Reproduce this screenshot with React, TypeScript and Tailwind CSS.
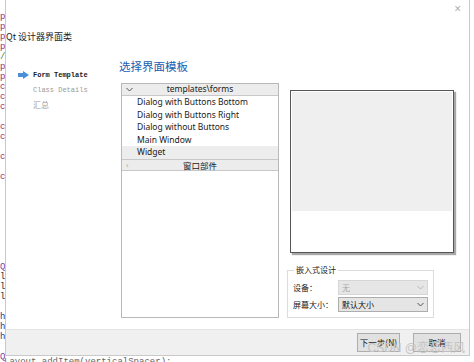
import React from 'react';

const codeMarks = [
  { ch: 'p', c: 'text-[#a0306a]' }, { ch: 'p', c: 'text-[#a0306a]' }, { ch: 'p', c: 'text-[#a0306a]' },
  { ch: 'p', c: 'text-[#a0306a]' }, { ch: '/', c: 'text-[#4a8a4a]' }, { ch: 'p', c: 'text-[#a0306a]' },
  { ch: 'p', c: 'text-[#a0306a]' }, { ch: 'c', c: 'text-[#a0306a]' }, { ch: 'c', c: 'text-[#a0306a]' },
  { ch: 'c', c: 'text-[#a0306a]' }, { ch: '', c: '' }, { ch: 'c', c: 'text-[#a0306a]' },
  { ch: 'c', c: 'text-[#a0306a]' }, { ch: '', c: '' }, { ch: 'c', c: 'text-[#a0306a]' },
  { ch: '', c: '' }, { ch: 'c', c: 'text-[#a0306a]' },
];

const codeMarks2 = [
  { ch: 'Q', c: 'text-[#7a3fa0]' }, { ch: 'l', c: 'text-[#333]' }, { ch: 'l', c: 'text-[#333]' },
  { ch: 'l', c: 'text-[#333]' }, { ch: '', c: '' }, { ch: 'h', c: 'text-[#2a3a8a]' },
  { ch: 'h', c: 'text-[#2a3a8a]' }, { ch: 'h', c: 'text-[#2a3a8a]' }, { ch: '', c: '' },
  { ch: 'Q', c: 'text-[#7a3fa0]' }, { ch: 'v', c: 'text-[#2a3a8a]' },
];

const templates = [
  'Dialog with Buttons Bottom',
  'Dialog with Buttons Right',
  'Dialog without Buttons',
  'Main Window',
  'Widget',
];

const Chevron = ({ className }: { className?: string }) => (
  <svg className={className} width="7" height="5" viewBox="0 0 7 5" fill="none" stroke="currentColor" strokeWidth="1">
    <path d="M0.5 1 L3.5 4 L6.5 1" />
  </svg>
);

const App: React.FC = () => {
  return (
    <div className="relative w-[474px] h-[362px] bg-white overflow-hidden" style={{ fontFamily: '"Noto Sans", "Noto Sans CJK SC", sans-serif' }}>
      {/* editor behind the dialog */}
      <div className="absolute left-0 top-[12px] w-[6px] flex flex-col text-[9px] leading-[10px] font-['Liberation_Mono',monospace]">
        {codeMarks.map((m, i) => (
          <span key={i} className={`h-[10px] ${m.c}`}>{m.ch}</span>
        ))}
      </div>
      <div className="absolute left-0 top-[262px] w-[6px] flex flex-col text-[9px] leading-[10px] font-['Liberation_Mono',monospace]">
        {codeMarks2.map((m, i) => (
          <span key={i} className={`h-[10px] ${m.c}`}>{m.ch}</span>
        ))}
      </div>
      <div className="absolute left-[4px] top-[357px] text-[9px] leading-[10px] text-[#666] font-['Liberation_Mono',monospace] whitespace-nowrap">
        Layout.addItem(verticalSpacer);
      </div>

      {/* dialog */}
      <div className="absolute left-[5px] top-0 w-[465px] h-[356px] bg-white border-l border-r border-b border-[#c9c9c9] flex flex-col">
        <div className="relative h-[54px]">
          <div className="pt-[31px] text-[9px] leading-[12px] text-[#222]" style={{ fontFamily: '"Noto Sans CJK SC", sans-serif' }}>
            Qt 设计器界面类
          </div>
          <span className="absolute right-[8px] top-[3px] text-[12px] text-[#b0b0b0] leading-none">×</span>
        </div>

        <div className="flex flex-1">
          {/* nav */}
          <div className="w-[113px] pt-[15px] pl-[12px] flex flex-col gap-[3px] text-[7px] leading-[12px] font-['Liberation_Mono',monospace]">
            <div className="flex items-center gap-[4px]">
              <svg width="11" height="8" viewBox="0 0 11 8">
                <path d="M0 2 H5 V0 L11 4 L5 8 V6 H0 Z" fill="#4a8fd8" />
              </svg>
              <span className="font-bold text-[#222]">Form Template</span>
            </div>
            <span className="pl-[15px] text-[#9a9a9a]">Class Details</span>
            <span className="pl-[15px] text-[#9a9a9a] text-[8px]" style={{ fontFamily: '"Noto Sans CJK SC", sans-serif' }}>汇总</span>
          </div>

          {/* content */}
          <div className="flex-1 flex flex-col">
            <div className="text-[11.5px] leading-[16px] text-[#2060b0] mt-[4px]" style={{ fontFamily: '"Noto Sans CJK SC", sans-serif' }}>
              选择界面模板
            </div>
            <div className="flex mt-[9px]">
              {/* tree */}
              <div className="ml-[2px] w-[158px] h-[235px] border border-[#b8b8b8] text-[8.5px] text-[#1a1a1a]">
                <div className="relative h-[12px] bg-[#ececec] border-b border-[#c8c8c8] flex items-center justify-center leading-none">
                  <Chevron className="absolute left-[4px] text-[#555]" />
                  templates\forms
                </div>
                {templates.map((t, i) => (
                  <div key={t} className={`h-[12.6px] flex items-center pl-[15px] leading-none ${i === 4 ? 'bg-[#ededed]' : ''}`}>
                    {t}
                  </div>
                ))}
                <div className="relative h-[12px] bg-[#ececec] border-y border-[#c8c8c8] flex items-center justify-center leading-none" style={{ fontFamily: '"Noto Sans CJK SC", sans-serif' }}>
                  <span className="absolute left-[4px] text-[#999] text-[8px]">›</span>
                  窗口部件
                </div>
              </div>

              {/* preview + embedded */}
              <div className="ml-[11px] flex flex-col">
                <div className="mt-[7px] w-[164px] h-[163px] border border-[#555] bg-white shadow-[2px_2px_1px_#a8a8a8] p-[1px]">
                  <div className="h-[119px] bg-[#efefef]" />
                </div>

                <div className="relative mt-[17px] -ml-[3px] w-[147px] h-[48px] border border-[#dcdcdc] px-[5px] pt-[9px] flex flex-col gap-[2px] text-[8px]" style={{ fontFamily: '"Noto Sans CJK SC", sans-serif' }}>
                  <span className="absolute left-[6px] -top-[7px] bg-white px-[2px] text-[8px] leading-[12px] text-[#222]">嵌入式设计</span>
                  <div className="flex items-center h-[15px]">
                    <span className="w-[45px] text-[#222]">设备：</span>
                    <div className="w-[90px] h-[15px] bg-[#e6e6e6] border border-[#d6d6d6] flex items-center justify-between px-[3px] text-[#a8a8a8]">
                      <span>无</span>
                      <Chevron className="text-[#b8b8b8]" />
                    </div>
                  </div>
                  <div className="flex items-center h-[15px]">
                    <span className="w-[45px] text-[#222]">屏幕大小：</span>
                    <div className="w-[90px] h-[15px] bg-[#e5e5e5] border border-[#adadad] flex items-center justify-between px-[3px] text-[#111]">
                      <span>默认大小</span>
                      <Chevron className="text-[#555]" />
                    </div>
                  </div>
                </div>
              </div>
            </div>
          </div>
        </div>

        {/* button bar */}
        <div className="relative h-[26px] bg-[#f0f0f0] border-t border-[#e4e4e4] flex items-center justify-end gap-[13px] pr-[8px] text-[8.5px]" style={{ fontFamily: '"Noto Sans CJK SC", sans-serif' }}>
          <button className="w-[43px] h-[19px] bg-[#e1e1e1] border border-[#adadad] text-[#111] leading-none">下一步(N)</button>
          <button className="w-[48px] h-[19px] bg-[#e1e1e1] border border-[#adadad] text-[#111] leading-none">取消</button>
          <span className="absolute right-[4px] top-[11px] text-[12px] leading-[14px] text-[#c4c4c4] whitespace-nowrap" style={{ fontFamily: '"Liberation Sans", "Noto Sans CJK SC", sans-serif' }}>
            CSDN @恋恋西风
          </span>
        </div>
      </div>
    </div>
  );
};

export default App;
